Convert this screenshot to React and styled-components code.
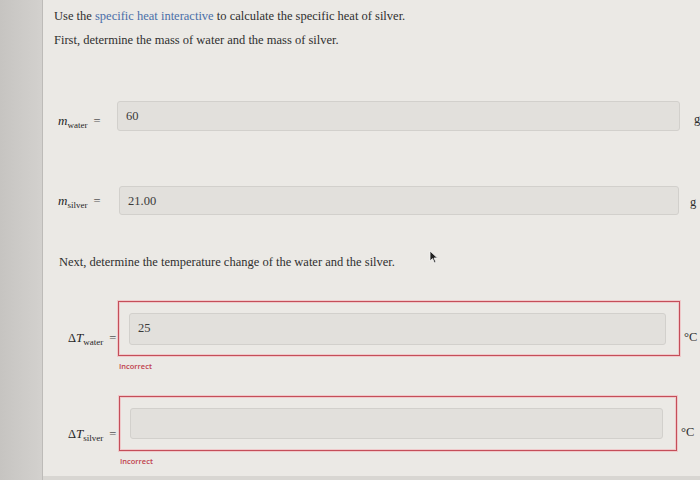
import React from "react";
import styled, { createGlobalStyle } from "styled-components";

const GlobalStyle = createGlobalStyle`
  html, body {
    margin: 0;
    padding: 0;
    background: #e9e7e3;
  }
  body {
    width: 700px;
    height: 480px;
    overflow: hidden;
    font-family: "Liberation Serif", "Times New Roman", serif;
    color: #2f2f2f;
  }
`;

const Page = styled.div`
  display: flex;
  width: 700px;
  height: 480px;
  position: relative;
`;

const Sidebar = styled.div`
  width: 42px;
  flex-shrink: 0;
  background: linear-gradient(90deg, #c6c4c1 0%, #d3d1ce 100%);
  border-right: 1px solid #bdbbb8;
`;

const Content = styled.div`
  flex: 1;
  display: flex;
  flex-direction: column;
  padding: 7px 0 0 11px;
  background: #ebe9e5;
  border-bottom: 4px solid #d8d6d2;
  box-sizing: border-box;
`;

const Para = styled.p`
  margin: ${(p) => p.$margin || "0"};
  font-size: 12.5px;
  line-height: 18px;
`;

const Link = styled.span`
  color: #4a6fa8;
`;

const Row = styled.div`
  display: flex;
  align-items: center;
  margin-top: ${(p) => p.$top}px;
`;

const Label = styled.div`
  width: ${(p) => p.$width}px;
  padding-left: ${(p) => p.$indent}px;
  box-sizing: border-box;
  flex-shrink: 0;
  font-size: 12.5px;
  padding-top: ${(p) => p.$drop || 0}px;
  white-space: nowrap;
  color: #262626;
`;

const Var = styled.i`
  font-size: 13px;
`;

const Sub = styled.sub`
  font-size: 9px;
  vertical-align: -3px;
`;

const Eq = styled.span`
  margin-left: 6px;
  color: #555;
`;

const Input = styled.div`
  flex: 1;
  height: ${(p) => p.$h || 30}px;
  box-sizing: border-box;
  background: #e2e0dc;
  border: 1px solid #d2d0cc;
  border-radius: 3px;
  font-size: 12.5px;
  padding: 7px 0 0 8px;
  color: #3a3a3a;
`;

const Unit = styled.div`
  width: ${(p) => p.$width}px;
  padding-left: ${(p) => p.$gap}px;
  box-sizing: border-box;
  flex-shrink: 0;
  font-size: 12.5px;
  padding-top: ${(p) => p.$drop || 0}px;
`;

const ErrorBox = styled.div`
  flex: 1;
  display: flex;
  align-items: center;
  height: 55px;
  box-sizing: border-box;
  padding: 0 13px 0 10px;
  border: 1.5px solid #c44e59;
  box-shadow: 0 0 0 1px #efc9ca, inset 0 0 0 1px #efc9ca;
`;

const ErrorText = styled.div`
  margin: 5px 0 0 ${(p) => p.$left}px;
  font-family: "Open Sans", "Liberation Sans", sans-serif;
  font-size: 7.5px;
  font-weight: 600;
  color: #c0404c;
`;

const Cursor = styled.svg`
  position: absolute;
  left: 429px;
  top: 250px;
`;

export default function App() {
  return (
    <>
      <GlobalStyle />
      <Page>
        <Sidebar />
        <Content>
          <Para>
            Use the <Link>specific heat interactive</Link> to calculate the
            specific heat of silver.
          </Para>
          <Para $margin="6px 0 0 0">
            First, determine the mass of water and the mass of silver.
          </Para>

          <Row $top={52}>
            <Label $width={63} $indent={4} $drop={10}>
              <Var>m</Var>
              <Sub>water</Sub>
              <Eq>=</Eq>
            </Label>
            <Input>60</Input>
            <Unit $width={20} $gap={14} $drop={6}>g</Unit>
          </Row>

          <Row $top={55}>
            <Label $width={65} $indent={4} $drop={2}>
              <Var>m</Var>
              <Sub>silver</Sub>
              <Eq>=</Eq>
            </Label>
            <Input $h={29}>21.00</Input>
            <Unit $width={21} $gap={11} $drop={3}>g</Unit>
          </Row>

          <Para $margin="38px 0 0 5px">
            Next, determine the temperature change of the water and the silver.
          </Para>

          <Row $top={30}>
            <Label $width={64} $indent={14} $drop={20}>
              Δ<Var>T</Var>
              <Sub>water</Sub>
              <Eq>=</Eq>
            </Label>
            <ErrorBox>
              <Input $h={32}>25</Input>
            </ErrorBox>
            <Unit $width={20} $gap={4} $drop={17}>°C</Unit>
          </Row>
          <ErrorText $left={65}>Incorrect</ErrorText>

          <Row $top={25}>
            <Label $width={65} $indent={14} $drop={22}>
              Δ<Var>T</Var>
              <Sub>silver</Sub>
              <Eq>=</Eq>
            </Label>
            <ErrorBox>
              <Input $h={31} />
            </ErrorBox>
            <Unit $width={23} $gap={4} $drop={18}>°C</Unit>
          </Row>
          <ErrorText $left={66}>Incorrect</ErrorText>
        </Content>
        <Cursor width="10" height="14" viewBox="0 0 10 14">
          <path d="M1 1 L1 11 L3.5 8.6 L5.5 13 L7 12.3 L5 8 L8.5 8 Z" fill="#222" stroke="#f5f5f5" strokeWidth="0.8" />
        </Cursor>
      </Page>
    </>
  );
}
